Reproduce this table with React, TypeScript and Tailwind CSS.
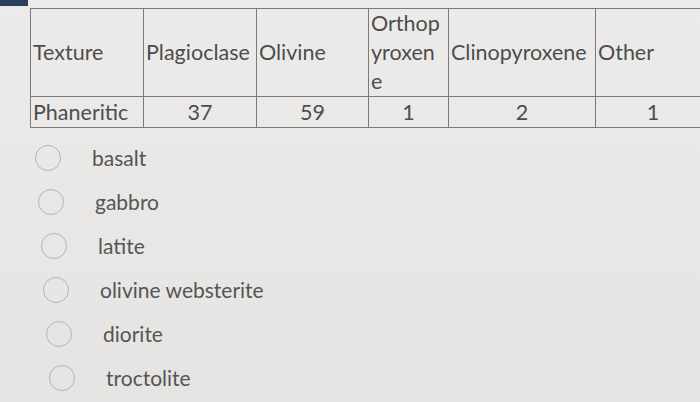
import React from 'react';

const HEADERS = ['Texture', 'Plagioclase', 'Olivine', 'Orthopyroxene', 'Clinopyroxene', 'Other'];

const OPTIONS: { label: string; pad: string }[] = [
  { label: 'basalt', pad: 'pl-[35px]' },
  { label: 'gabbro', pad: 'pl-[38px]' },
  { label: 'latite', pad: 'pl-[41px]' },
  { label: 'olivine websterite', pad: 'pl-[43px]' },
  { label: 'diorite', pad: 'pl-[46px]' },
  { label: 'troctolite', pad: 'pl-[49px]' },
];

export default function App() {
  return (
    <div
      className="relative w-[700px] h-[402px] overflow-hidden bg-gradient-to-b from-[#ecebe9] to-[#e5e4e2] text-[#505050]"
      style={{ fontFamily: 'Lato, "Open Sans", sans-serif' }}
    >
      {/* dark corner of the browser chrome */}
      <div className="absolute left-0 top-0 w-[28px] h-[6px] bg-[#2b3f5c]" />

      <div className="pt-[8px] pl-[30px]">
        <table className="border-collapse text-[21.5px] leading-[29px] text-[#4d4d4d] table-fixed w-[680px]">
          <colgroup>
            <col className="w-[113px]" />
            <col className="w-[113px]" />
            <col className="w-[112px]" />
            <col className="w-[80px]" />
            <col className="w-[147px]" />
            <col className="w-[115px]" />
          </colgroup>
          <thead>
            <tr className="h-[88px]">
              {HEADERS.map(h => (
                <th
                  key={h}
                  className="border-[1.5px] border-[#7a7a7a] px-[2px] py-0 text-left font-normal align-middle break-all"
                >
                  {h}
                </th>
              ))}
            </tr>
          </thead>
          <tbody>
            <tr className="h-[31px]">
              <td className="border-[1.5px] border-[#7a7a7a] px-[2px] leading-[27px]">Phaneritic</td>
              <td className="border-[1.5px] border-[#7a7a7a] text-center leading-[27px]">37</td>
              <td className="border-[1.5px] border-[#7a7a7a] text-center leading-[27px]">59</td>
              <td className="border-[1.5px] border-[#7a7a7a] text-center leading-[27px]">1</td>
              <td className="border-[1.5px] border-[#7a7a7a] text-center leading-[27px]">2</td>
              <td className="border-[1.5px] border-[#7a7a7a] text-center leading-[27px]">1</td>
            </tr>
          </tbody>
        </table>
      </div>

      {/* answer choices */}
      <div className="mt-[17px] flex flex-col gap-[18px]">
        {OPTIONS.map(o => (
          <label key={o.label} className={`flex items-center gap-[31px] h-[26px] ${o.pad}`}>
            <span className="w-[26px] h-[26px] rounded-full border-[1.5px] border-[#b4b4b2] shrink-0" />
            <span className="text-[21px] text-[#555555]">{o.label}</span>
          </label>
        ))}
      </div>
    </div>
  );
}
